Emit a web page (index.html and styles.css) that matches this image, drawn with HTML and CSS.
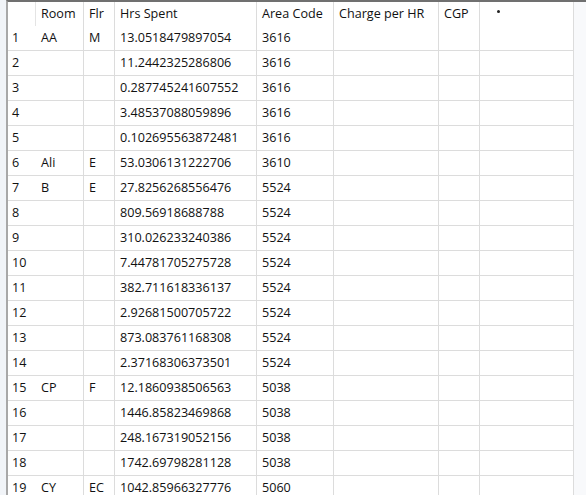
FILE: index.html
```html
<!DOCTYPE html>
<html>
<head>
<meta charset="utf-8">
<link rel="stylesheet" href="styles.css">
</head>
<body>
<div class="frame">
  <div class="strip"></div>
  <div class="main">
    <div class="grid">
      <div class="row head">
        <div class="c rh"></div>
        <div class="c">Room</div>
        <div class="c">Flr</div>
        <div class="c">Hrs Spent</div>
        <div class="c">Area Code</div>
        <div class="c">Charge per HR</div>
        <div class="c">CGP</div>
        <div class="c star"><span class="dot"></span></div>
      </div>
      <div class="row first"><div class="c rh">1</div><div class="c">AA</div><div class="c">M</div><div class="c">13.0518479897054</div><div class="c">3616</div><div class="c"></div><div class="c"></div><div class="c"></div></div>
      <div class="row"><div class="c rh">2</div><div class="c"></div><div class="c"></div><div class="c">11.2442325286806</div><div class="c">3616</div><div class="c"></div><div class="c"></div><div class="c"></div></div>
      <div class="row"><div class="c rh">3</div><div class="c"></div><div class="c"></div><div class="c">0.287745241607552</div><div class="c">3616</div><div class="c"></div><div class="c"></div><div class="c"></div></div>
      <div class="row"><div class="c rh">4</div><div class="c"></div><div class="c"></div><div class="c">3.48537088059896</div><div class="c">3616</div><div class="c"></div><div class="c"></div><div class="c"></div></div>
      <div class="row"><div class="c rh">5</div><div class="c"></div><div class="c"></div><div class="c">0.102695563872481</div><div class="c">3616</div><div class="c"></div><div class="c"></div><div class="c"></div></div>
      <div class="row"><div class="c rh">6</div><div class="c">Ali</div><div class="c">E</div><div class="c">53.0306131222706</div><div class="c">3610</div><div class="c"></div><div class="c"></div><div class="c"></div></div>
      <div class="row"><div class="c rh">7</div><div class="c">B</div><div class="c">E</div><div class="c">27.8256268556476</div><div class="c">5524</div><div class="c"></div><div class="c"></div><div class="c"></div></div>
      <div class="row"><div class="c rh">8</div><div class="c"></div><div class="c"></div><div class="c">809.56918688788</div><div class="c">5524</div><div class="c"></div><div class="c"></div><div class="c"></div></div>
      <div class="row"><div class="c rh">9</div><div class="c"></div><div class="c"></div><div class="c">310.026233240386</div><div class="c">5524</div><div class="c"></div><div class="c"></div><div class="c"></div></div>
      <div class="row"><div class="c rh">10</div><div class="c"></div><div class="c"></div><div class="c">7.44781705275728</div><div class="c">5524</div><div class="c"></div><div class="c"></div><div class="c"></div></div>
      <div class="row"><div class="c rh">11</div><div class="c"></div><div class="c"></div><div class="c">382.711618336137</div><div class="c">5524</div><div class="c"></div><div class="c"></div><div class="c"></div></div>
      <div class="row"><div class="c rh">12</div><div class="c"></div><div class="c"></div><div class="c">2.92681500705722</div><div class="c">5524</div><div class="c"></div><div class="c"></div><div class="c"></div></div>
      <div class="row"><div class="c rh">13</div><div class="c"></div><div class="c"></div><div class="c">873.083761168308</div><div class="c">5524</div><div class="c"></div><div class="c"></div><div class="c"></div></div>
      <div class="row"><div class="c rh">14</div><div class="c"></div><div class="c"></div><div class="c">2.37168306373501</div><div class="c">5524</div><div class="c"></div><div class="c"></div><div class="c"></div></div>
      <div class="row"><div class="c rh">15</div><div class="c">CP</div><div class="c">F</div><div class="c">12.1860938506563</div><div class="c">5038</div><div class="c"></div><div class="c"></div><div class="c"></div></div>
      <div class="row"><div class="c rh">16</div><div class="c"></div><div class="c"></div><div class="c">1446.85823469868</div><div class="c">5038</div><div class="c"></div><div class="c"></div><div class="c"></div></div>
      <div class="row"><div class="c rh">17</div><div class="c"></div><div class="c"></div><div class="c">248.167319052156</div><div class="c">5038</div><div class="c"></div><div class="c"></div><div class="c"></div></div>
      <div class="row"><div class="c rh">18</div><div class="c"></div><div class="c"></div><div class="c">1742.69798281128</div><div class="c">5038</div><div class="c"></div><div class="c"></div><div class="c"></div></div>
      <div class="row"><div class="c rh">19</div><div class="c">CY</div><div class="c">EC</div><div class="c">1042.85966327776</div><div class="c">5060</div><div class="c"></div><div class="c"></div><div class="c"></div></div>
    </div>
    <div class="filler"></div>
  </div>
</div>
</body>
</html>
```
FILE: styles.css
```css
html, body {
  margin: 0;
  padding: 0;
  background: #ffffff;
  overflow: hidden;
}
body {
  width: 586px;
  height: 495px;
  font-family: "Open Sans", "Liberation Sans", sans-serif;
  font-size: 12.6px;
  color: #111111;
}
.frame {
  display: flex;
  height: 495px;
}
.strip {
  width: 6px;
  flex: none;
  background: #f1f4f8;
}
.main {
  flex: 1;
  display: flex;
  border-top: 2px solid #707070;
  border-left: 2px solid #a8a8a8;
  overflow: hidden;
}
.grid {
  width: 566px;
  flex: none;
  display: flex;
  flex-direction: column;
}
.row {
  display: grid;
  grid-template-columns: 28px 48px 31px 142px 77px 105px 41px 94px;
  height: 25px;
  flex: none;
  box-sizing: border-box;
  border-bottom: 1px solid #dcdcdc;
}
.row.head {
  height: 24px;
  border-bottom: none;
}
.c {
  box-sizing: border-box;
  border-right: 1px solid #dcdcdc;
  padding-left: 5px;
  display: flex;
  align-items: center;
  white-space: nowrap;
  overflow: hidden;
  line-height: 1;
}
.row .rh {
  border-right-color: #ffffff;
  padding-left: 4px;
}
.row.head .rh {
  border-right-color: #e4e4e4;
}
.head .c {
  padding-top: 1px;
}
.star {
  align-items: flex-start;
  padding-left: 17px;
}
.dot {
  width: 3px;
  height: 3px;
  margin-top: 7px;
  border-radius: 50%;
  background: #222222;
}
.filler {
  flex: 1;
  background: #f8f9fb;
}
```
